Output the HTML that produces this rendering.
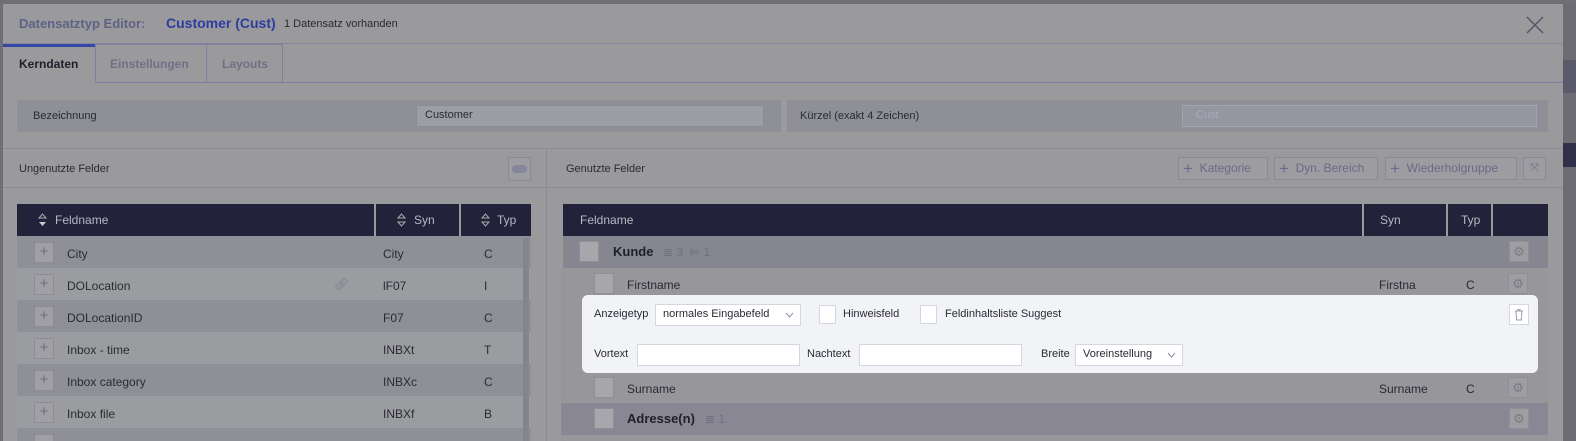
<!DOCTYPE html>
<html style="overflow:hidden;width:1576px;height:441px"><head><meta charset="utf-8"><style>
*{box-sizing:border-box;margin:0;padding:0}
body{width:1576px;height:441px;overflow:hidden;background:#6f6f76;font-family:"Liberation Sans",sans-serif;font-size:12px;color:#2a2a33;position:relative}
.a{position:absolute}
.modal{left:3px;top:4px;width:1560px;height:437px;background:#9a9a9d}
.t{white-space:nowrap}
.hl{height:1px;background:#85869a}
.box{border:1px solid #8a8b98;background:#9c9ca1}
.pl{width:20px;height:21px;border:1px solid #8b8c98;background:#a0a0a4;color:#6c6d80;text-align:center;line-height:18px;font-size:15px}
.th{background:#22223a;color:#b8b8c4;height:32px;line-height:32px}
.sq{width:20px;height:21px;background:#a7a7ab;border:1px solid #8f8f97}
.gear{width:20px;height:21px;border:1px solid #8f8f98;background:#9d9da2;color:#7b7b85;text-align:center;line-height:19px;font-size:13px}
.inp{background:#fff;border:1px solid #d5d7e0;height:22px}
.cb{width:17px;height:19px;background:#fff;border:1px solid #d5d7e0}
.srt{display:inline-block;vertical-align:middle;width:8px;height:14px;position:relative}
</style></head><body>
<div class="a modal"></div>
<div class="a" style="left:1563px;top:0;width:13px;height:441px;background:#6c6c72"></div>
<div class="a" style="left:1563px;top:60px;width:13px;height:33px;background:#5a5a6a"></div>
<div class="a" style="left:1563px;top:143px;width:13px;height:24px;background:#30304a"></div>
<div class="a" style="left:0;top:0;width:1576px;height:4px;background:#6f6f76"></div>

<div class="a t" style="left:19px;top:16px;font-size:13px;font-weight:bold;color:#5e6185">Datensatztyp Editor:</div>
<div class="a t" style="left:166px;top:15px;font-size:14px;font-weight:bold;color:#2d3ca0">Customer (Cust)</div>
<div class="a t" style="left:284px;top:18px;font-size:11px;color:#2a2a33">1 Datensatz vorhanden</div>
<svg class="a" style="left:1526px;top:16px" width="18" height="18"><path d="M1 1L17 17M17 1L1 17" stroke="#55566a" stroke-width="1.5"/></svg>
<div class="a hl" style="left:3px;top:43px;width:1560px"></div>

<div class="a" style="left:3px;top:44px;width:92px;height:39px;background:#9a9a9d;border-top:3px solid #3447a6"></div>
<div class="a t" style="left:19px;top:57px;font-weight:bold;color:#1f1f2a">Kerndaten</div>
<div class="a" style="left:95px;top:44px;width:112px;height:39px;border:1px solid #7f80a0;border-bottom:none"></div>
<div class="a t" style="left:110px;top:57px;font-weight:bold;color:#6f7088">Einstellungen</div>
<div class="a" style="left:206px;top:44px;width:77px;height:39px;border:1px solid #7f80a0;border-bottom:none"></div>
<div class="a t" style="left:222px;top:57px;font-weight:bold;color:#6f7088">Layouts</div>
<div class="a hl" style="left:95px;top:82px;width:1468px;background:#7f80a0"></div>

<div class="a" style="left:17px;top:100px;width:764px;height:32px;background:#8f9097"></div>
<div class="a" style="left:787px;top:100px;width:761px;height:32px;background:#8f9097"></div>
<div class="a t" style="left:33px;top:110px;font-size:11px">Bezeichnung</div>
<div class="a box" style="left:416px;top:105px;width:348px;height:22px;background:#9d9ea3"></div>
<div class="a t" style="left:425px;top:109px;font-size:11px">Customer</div>
<div class="a t" style="left:800px;top:110px;font-size:11px">Kürzel (exakt 4 Zeichen)</div>
<div class="a box" style="left:1182px;top:105px;width:355px;height:22px;background:#9597a0;border-color:#a2a3ab"></div>
<div class="a t" style="left:1196px;top:109px;font-size:11px;color:#a8a9bf">Cust</div>

<div class="a hl" style="left:3px;top:148px;width:1560px;background:#8a8b9a"></div>
<div class="a" style="left:546px;top:148px;width:1px;height:293px;background:#8a8b9a"></div>
<div class="a t" style="left:19px;top:163px;font-size:11px">Ungenutzte Felder</div>
<div class="a box" style="left:508px;top:157px;width:23px;height:24px"><div class="a" style="left:3px;top:7px;width:15px;height:8px;border-radius:4px;background:#85869a"></div></div>
<div class="a t" style="left:566px;top:163px;font-size:11px">Genutzte Felder</div>
<div class="a hl" style="left:3px;top:187px;width:1560px;background:#8a8b9a"></div>

<div class="a box t" style="left:1178px;top:157px;width:90px;height:23px;line-height:21px;padding-left:4px;color:#6a6b88;font-size:12px"><span style="font-size:17px;vertical-align:-2px">+</span>&nbsp; Kategorie</div>
<div class="a box t" style="left:1274px;top:157px;width:104px;height:23px;line-height:21px;padding-left:4px;color:#6a6b88;font-size:12px"><span style="font-size:17px;vertical-align:-2px">+</span>&nbsp; Dyn. Bereich</div>
<div class="a box t" style="left:1385px;top:157px;width:132px;height:23px;line-height:21px;padding-left:4px;color:#6a6b88;font-size:12px"><span style="font-size:17px;vertical-align:-2px">+</span>&nbsp; Wiederholgruppe</div>
<div class="a box" style="left:1523px;top:157px;width:23px;height:23px;text-align:center;line-height:20px;color:#6a6b88;font-size:11px">⤧</div>

<!-- left table -->
<div class="a th" style="left:17px;top:204px;width:357px"><svg class="a" style="left:21px;top:9px" width="9" height="14"><path d="M1 5L4.5 1L8 5Z" fill="none" stroke="#aaa"/><path d="M1 9L4.5 13L8 9Z" fill="#ccc"/></svg><span style="margin-left:38px">Feldname</span></div>
<div class="a th" style="left:376px;top:204px;width:83px"><svg class="a" style="left:21px;top:9px" width="9" height="14"><path d="M1 5L4.5 1L8 5Z" fill="none" stroke="#aaa"/><path d="M1 9L4.5 13L8 9Z" fill="none" stroke="#aaa"/></svg><span style="margin-left:38px">Syn</span></div>
<div class="a th" style="left:461px;top:204px;width:70px"><svg class="a" style="left:20px;top:9px" width="9" height="14"><path d="M1 5L4.5 1L8 5Z" fill="none" stroke="#aaa"/><path d="M1 9L4.5 13L8 9Z" fill="none" stroke="#aaa"/></svg><span style="margin-left:36px">Typ</span></div>

<div class="a" style="left:17px;top:236px;width:514px;height:205px;overflow:hidden">
<div class="a" style="left:0;top:0;width:514px;height:32px;background:#8f9097"></div>
<div class="a" style="left:0;top:32px;width:514px;height:32px;background:#9b9ca0"></div>
<div class="a" style="left:0;top:64px;width:514px;height:32px;background:#8f9097"></div>
<div class="a" style="left:0;top:96px;width:514px;height:32px;background:#9b9ca0"></div>
<div class="a" style="left:0;top:128px;width:514px;height:32px;background:#8f9097"></div>
<div class="a" style="left:0;top:160px;width:514px;height:32px;background:#9b9ca0"></div>
<div class="a" style="left:0;top:192px;width:514px;height:13px;background:#8f9097"></div>
<div class="a pl" style="left:17px;top:198px"></div>
<div class="a" style="left:506px;top:2px;width:6px;height:203px;background:#84858c"></div>
</div>
<div class="a pl" style="left:34px;top:242px">+</div><div class="a t" style="left:67px;top:247px">City</div><div class="a t" style="left:383px;top:247px">City</div><div class="a t" style="left:484px;top:247px">C</div>
<div class="a pl" style="left:34px;top:274px">+</div><div class="a t" style="left:67px;top:279px">DOLocation</div><div class="a t" style="left:334px;top:277px;color:#80818f">🔗︎</div><div class="a t" style="left:383px;top:279px">lF07</div><div class="a t" style="left:484px;top:279px">I</div>
<div class="a pl" style="left:34px;top:306px">+</div><div class="a t" style="left:67px;top:311px">DOLocationID</div><div class="a t" style="left:383px;top:311px">F07</div><div class="a t" style="left:484px;top:311px">C</div>
<div class="a pl" style="left:34px;top:338px">+</div><div class="a t" style="left:67px;top:343px">Inbox - time</div><div class="a t" style="left:383px;top:343px">INBXt</div><div class="a t" style="left:484px;top:343px">T</div>
<div class="a pl" style="left:34px;top:370px">+</div><div class="a t" style="left:67px;top:375px">Inbox category</div><div class="a t" style="left:383px;top:375px">INBXc</div><div class="a t" style="left:484px;top:375px">C</div>
<div class="a pl" style="left:34px;top:402px">+</div><div class="a t" style="left:67px;top:407px">Inbox file</div><div class="a t" style="left:383px;top:407px">INBXf</div><div class="a t" style="left:484px;top:407px">B</div>

<!-- right table -->
<div class="a th" style="left:563px;top:204px;width:799px;padding-left:17px">Feldname</div>
<div class="a th" style="left:1364px;top:204px;width:82px;padding-left:16px">Syn</div>
<div class="a th" style="left:1448px;top:204px;width:43px;padding-left:13px">Typ</div>
<div class="a th" style="left:1493px;top:204px;width:55px"></div>

<div class="a" style="left:563px;top:236px;width:985px;height:205px;background:#85868f"></div>
<div class="a" style="left:561px;top:268px;width:987px;height:104px;background:#96969b"></div>
<div class="a" style="left:561px;top:372px;width:987px;height:31px;background:#96969b"></div>
<div class="a" style="left:561px;top:403px;width:987px;height:32px;background:#8a8794"></div>
<div class="a" style="left:561px;top:435px;width:987px;height:6px;background:#96969b"></div>

<div class="a sq" style="left:579px;top:241px"></div>
<div class="a t" style="left:613px;top:244px;font-size:13px;font-weight:bold;color:#1f1f2a">Kunde</div>
<div class="a t" style="left:663px;top:245px;color:#6e6f80">≣ 3 &nbsp;⊨ 1</div>
<div class="a gear" style="left:1509px;top:241px">⚙</div>
<div class="a sq" style="left:594px;top:273px"></div>
<div class="a t" style="left:627px;top:278px">Firstname</div>
<div class="a t" style="left:1379px;top:278px">Firstna</div>
<div class="a t" style="left:1466px;top:278px">C</div>
<div class="a gear" style="left:1508px;top:273px">⚙</div>

<div class="a sq" style="left:594px;top:377px"></div>
<div class="a t" style="left:627px;top:382px">Surname</div>
<div class="a t" style="left:1379px;top:382px">Surname</div>
<div class="a t" style="left:1466px;top:382px">C</div>
<div class="a gear" style="left:1508px;top:377px">⚙</div>
<div class="a sq" style="left:594px;top:408px"></div>
<div class="a t" style="left:627px;top:411px;font-size:13px;font-weight:bold;color:#1f1f2a">Adresse(n)</div>
<div class="a t" style="left:705px;top:412px;color:#6e6f80">≣ 1</div>
<div class="a gear" style="left:1509px;top:408px">⚙</div>

<!-- popup -->
<div class="a" style="left:582px;top:295px;width:956px;height:78px;background:#f2f3f7;border-radius:6px"></div>
<div class="a t" style="left:594px;top:308px;font-size:11px">Anzeigetyp</div>
<div class="a inp" style="left:655px;top:304px;width:146px"></div>
<div class="a t" style="left:663px;top:308px;font-size:11px">normales Eingabefeld</div>
<svg class="a" style="left:785px;top:312px" width="9" height="6"><path d="M1 1L4.5 5L8 1" fill="none" stroke="#8b8ca8"/></svg>
<div class="a cb" style="left:819px;top:305px"></div>
<div class="a t" style="left:843px;top:308px;font-size:11px">Hinweisfeld</div>
<div class="a cb" style="left:920px;top:305px"></div>
<div class="a t" style="left:945px;top:308px;font-size:11px">Feldinhaltsliste Suggest</div>
<div class="a inp" style="left:1509px;top:304px;width:20px;height:21px"></div>
<svg class="a" style="left:1514px;top:308px" width="10" height="13"><path d="M1 3H9M4 3V1.5H6V3M2 3L2.7 12H7.3L8 3" fill="none" stroke="#9a9bb0"/></svg>
<div class="a t" style="left:594px;top:348px;font-size:11px">Vortext</div>
<div class="a inp" style="left:637px;top:344px;width:163px"></div>
<div class="a t" style="left:807px;top:348px;font-size:11px">Nachtext</div>
<div class="a inp" style="left:859px;top:344px;width:163px"></div>
<div class="a t" style="left:1041px;top:348px;font-size:11px">Breite</div>
<div class="a inp" style="left:1075px;top:344px;width:108px"></div>
<div class="a t" style="left:1083px;top:348px;font-size:11px">Voreinstellung</div>
<svg class="a" style="left:1167px;top:352px" width="9" height="6"><path d="M1 1L4.5 5L8 1" fill="none" stroke="#8b8ca8"/></svg>
</body></html>
